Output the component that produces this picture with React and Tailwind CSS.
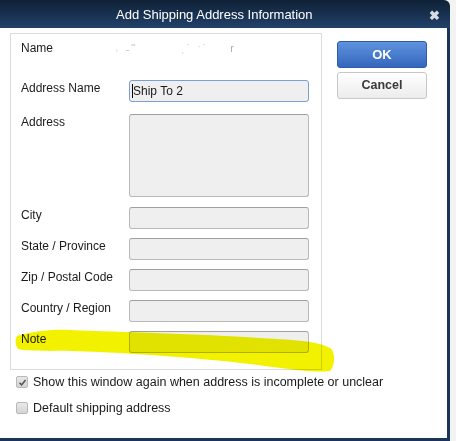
import React from 'react';

const font = { fontFamily: '"Liberation Sans", Arial, sans-serif' };

const Field = ({ label, tall, active, value, className = '' }) => (
  <div className={`flex items-start ${className}`}>
    <span className="w-[108px] shrink-0 leading-[16px] text-[12px] text-[#1a1a1a]">{label}</span>
    <div
      className={`w-[180px] rounded-[3px] border bg-[#efefef] ${tall ? 'h-[83px]' : 'h-[22px]'} ${
        active ? 'border-[#7b9fd4]' : 'border-[#b9b9b9] border-t-[#9f9f9f]'
      } flex items-center pl-[2px] text-[12px] text-[#1a1a1a]`}
    >
      {value !== undefined && (
        <>
          <span className="inline-block w-px h-[14px] bg-black" />
          <span>{value}</span>
        </>
      )}
    </div>
  </div>
);

const Check = ({ checked, label, className = '' }) => (
  <div className={`flex items-center h-[16px] whitespace-nowrap ${className}`}>
    <span className="w-[12px] h-[12px] shrink-0 rounded-[2px] border border-[#b8b8b8] bg-gradient-to-b from-[#e9e9e9] to-[#d4d4d4] flex items-center justify-center">
      {checked && (
        <svg width="9" height="9" viewBox="0 0 9 9">
          <path d="M1.5 4.8 L3.6 6.9 L7.6 2" fill="none" stroke="#555" strokeWidth="1.6" />
        </svg>
      )}
    </span>
    <span className="ml-[5px] text-[12.5px] text-[#1a1a1a]">{label}</span>
  </div>
);

export default function App() {
  return (
    <div className="relative w-[456px] h-[441px] bg-[#f3f3f3] overflow-hidden" style={font}>
      <div className="w-[450px] h-[441px] flex flex-col">
        <div className="h-[28px] shrink-0 rounded-tr-[6px] bg-gradient-to-b from-[#0f2136] to-[#22416a] flex items-center relative">
          <span className="ml-[116px] mt-[2px] text-[13px] text-white">Add Shipping Address Information</span>
          <span className="absolute left-[429px] top-[6px] text-[13px] font-bold text-[#d8dde4]">✖</span>
        </div>
        <div className="flex-1 min-h-0 flex bg-white border-r-[3px] border-b-[3px] border-[#1b3556] pl-[10px] pt-[5px]">
          <div className="w-[312px] shrink-0 flex flex-col">
            <div className="w-[312px] h-[337px] border border-[#dcdcdc] pl-[10px] flex flex-col">
              <div className="mt-[6px] flex items-center h-[16px]">
                <span className="w-[94px] text-[12px] text-[#1a1a1a]">Name</span>
                <span className="text-[11px] text-[#c4c4c4] tracking-[2px]">˒ ˗˜</span>
                <span className="ml-[44px] text-[11px] text-[#c4c4c4] tracking-[2px]">ˌ˙ ˑ˙</span>
                <span className="ml-[22px] text-[11px] text-[#b0b0b0]">r</span>
              </div>
              <Field label="Address Name" active value="Ship To 2" className="mt-[24px]" />
              <Field label="Address" tall className="mt-[12px]" />
              <Field label="City" className="mt-[10px]" />
              <Field label="State / Province" className="mt-[9px]" />
              <Field label="Zip / Postal Code" className="mt-[9px]" />
              <Field label="Country / Region" className="mt-[9px]" />
              <Field label="Note" className="mt-[9px]" />
            </div>
            <Check checked label="Show this window again when address is incomplete or unclear" className="mt-[4px] ml-[6px]" />
            <Check label="Default shipping address" className="mt-[10px] ml-[6px]" />
          </div>
          <div className="ml-[15px] mt-[8px] flex flex-col gap-[4px]">
            <button className="w-[90px] h-[27px] rounded-[3px] border border-[#2f5ba6] bg-gradient-to-b from-[#5f93de] to-[#3467bd] text-white text-[13px] font-bold">
              OK
            </button>
            <button className="w-[90px] h-[27px] rounded-[3px] border border-[#c8c8c8] bg-gradient-to-b from-white to-[#ececec] text-[#3a3a3a] text-[12.5px] font-bold">
              Cancel
            </button>
          </div>
        </div>
      </div>
      <svg className="absolute inset-0 mix-blend-multiply pointer-events-none" width="456" height="441">
        <path
          d="M17,336 C30,332 50,329 70,330 C120,332 200,334 260,338 C300,340 320,342 330,348 C336,352 335,366 330,371 C310,373 290,369 250,364 C200,358 140,354 100,352 C60,350 30,352 18,349 C15,345 15,339 17,336 Z"
          fill="#f2f200"
        />
      </svg>
    </div>
  );
}
